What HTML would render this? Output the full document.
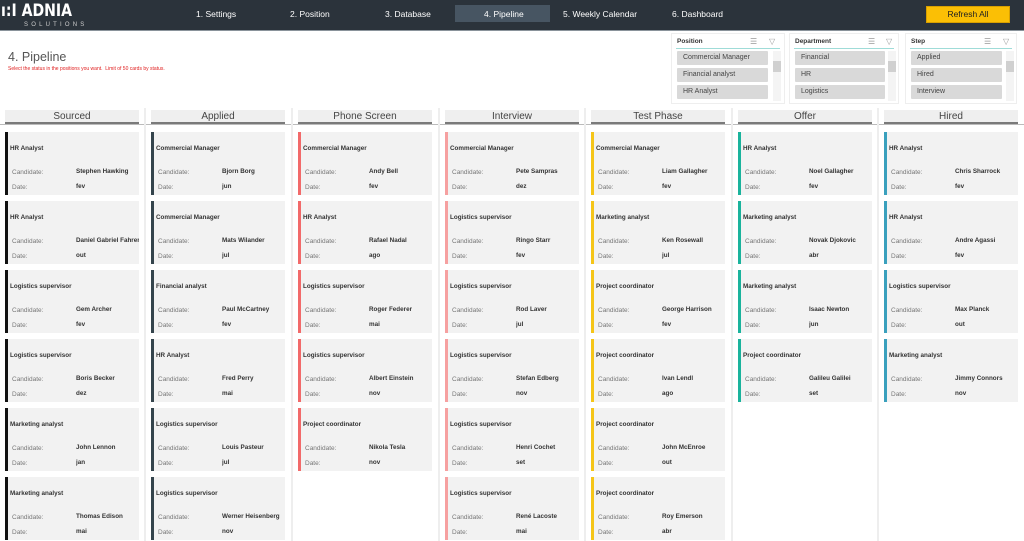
<!DOCTYPE html>
<html><head><meta charset="utf-8"><style>
*{margin:0;padding:0;box-sizing:border-box}
body{width:1024px;height:541px;overflow:hidden;background:#fff;font-family:"Liberation Sans",sans-serif;position:relative}
.top{position:absolute;left:0;top:0;width:1024px;height:31px;background:#2b333b;border-bottom:1px solid #8a939b}
.logo{position:absolute;left:1px;top:1px;color:#fff;font-weight:bold;font-size:17px;letter-spacing:0px;font-family:"DejaVu Sans Condensed","Liberation Sans Narrow","Liberation Sans",sans-serif;transform:scaleX(0.92);transform-origin:left}
.sol{position:absolute;left:24px;top:22px;color:#ccc;font-size:6px;letter-spacing:3.2px}
.nav{position:absolute;top:9px;color:#fff;font-size:8.5px}
.navsel{position:absolute;left:455px;top:5px;width:95px;height:17px;background:#475562}
.refresh{position:absolute;left:926px;top:6px;width:84px;height:17px;background:#fbbf05;border:1px solid #d9a000;font-size:8.5px;text-align:center;line-height:15px;color:#222}
h1{position:absolute;left:8px;top:50px;font-size:12.5px;font-weight:normal;color:#555}
.sub{position:absolute;left:8px;top:66px;font-size:5px;color:#e02020}
.sl{position:absolute;top:33px;height:71px;border:1px solid #eee;background:#fff}
.sl .h{position:absolute;left:5px;top:4px;font-size:6.5px;font-weight:bold;color:#333}
.sl .u{position:absolute;left:4px;right:4px;top:14px;height:1px;background:#9fdcd8}
.sl .ic{position:absolute;top:3px;font-size:8px;color:#999}
.sl .it{position:absolute;left:5px;height:14px;background:#d9d9d9;font-size:7px;color:#444;padding-left:6px;line-height:14px;border-radius:1px}
.sl .sb{position:absolute;width:8px;top:17px;height:50px;background:#f4f4f4}
.sl .th{position:absolute;width:8px;top:27px;height:11px;background:#d0d0d0}
.hline{position:absolute;left:0;top:124px;width:1024px;height:1px;background:#bbb}
.vs{position:absolute;top:108px;width:2px;height:433px;background:#eee}
.col{position:absolute;top:110px;width:134px}
.ch{height:14px;background:#efefef;border-bottom:2px solid #7a7a7a;text-align:center;font-size:10px;color:#444;line-height:14px}
.card{position:absolute;left:0;width:134px;height:63px;background:#f2f2f2;border-left:3px solid #111}
.card .t{position:absolute;left:2px;top:13px;font-size:6.3px;font-weight:bold;color:#333}
.card .l1,.card .l2{position:absolute;left:4px;font-size:6.5px;color:#777}
.card .l1{top:37px}.card .l2{top:52px}
.card .v1,.card .v2{position:absolute;left:68px;font-size:6.3px;font-weight:bold;color:#333;white-space:nowrap;overflow:hidden;width:63px}
.card .v1{top:36px}.card .v2{top:51px}
.c1{top:22px}.c2{top:91px}.c3{top:160px}.c4{top:229px}.c5{top:298px}.c6{top:367px}
.k0 .card{border-color:#111}.k1 .card{border-color:#34444c}.k2 .card{border-color:#f26a6a}.k3 .card{border-color:#f6a0a0}.k4 .card{border-color:#f5c518}.k5 .card{border-color:#1ab39c}.k6 .card{border-color:#3aa0bd}
</style></head><body>
<div class="top">
<div class="logo">ı:I ADNIA</div><div class="sol">SOLUTIONS</div>
<div class="navsel"></div>
<div class="nav" style="left:196px">1. Settings</div>
<div class="nav" style="left:290px">2. Position</div>
<div class="nav" style="left:385px">3. Database</div>
<div class="nav" style="left:484px">4. Pipeline</div>
<div class="nav" style="left:563px">5. Weekly Calendar</div>
<div class="nav" style="left:672px">6. Dashboard</div>
<div class="refresh">Refresh All</div>
</div>
<h1>4. Pipeline</h1>
<div class="sub">Select the status in the positions you want.&nbsp; Limit of 50 cards by status.</div>

<div class="sl" style="left:671px;width:114px"><div class="h">Position</div><div class="ic" style="left:78px">☰</div><div class="ic" style="left:97px">▽</div><div class="u"></div>
<div class="it" style="top:17px;width:91px">Commercial Manager</div><div class="it" style="top:34px;width:91px">Financial analyst</div><div class="it" style="top:51px;width:91px">HR Analyst</div><div class="sb" style="left:101px"></div><div class="th" style="left:101px"></div></div>
<div class="sl" style="left:789px;width:110px"><div class="h">Department</div><div class="ic" style="left:78px">☰</div><div class="ic" style="left:96px">▽</div><div class="u"></div>
<div class="it" style="top:17px;width:90px">Financial</div><div class="it" style="top:34px;width:90px">HR</div><div class="it" style="top:51px;width:90px">Logistics</div><div class="sb" style="left:98px"></div><div class="th" style="left:98px"></div></div>
<div class="sl" style="left:905px;width:112px"><div class="h">Step</div><div class="ic" style="left:78px">☰</div><div class="ic" style="left:97px">▽</div><div class="u"></div>
<div class="it" style="top:17px;width:91px">Applied</div><div class="it" style="top:34px;width:91px">Hired</div><div class="it" style="top:51px;width:91px">Interview</div><div class="sb" style="left:100px"></div><div class="th" style="left:100px"></div></div>

<div class="hline"></div>
<div class="vs" style="left:144px"></div><div class="vs" style="left:291px"></div><div class="vs" style="left:438px"></div><div class="vs" style="left:584px"></div><div class="vs" style="left:731px"></div><div class="vs" style="left:877px"></div>

<div class="col k0" style="left:5px"><div class="ch">Sourced</div>
<div class="card c1"><div class="t">HR Analyst</div><div class="l1">Candidate:</div><div class="v1">Stephen Hawking</div><div class="l2">Date:</div><div class="v2">fev</div></div>
<div class="card c2"><div class="t">HR Analyst</div><div class="l1">Candidate:</div><div class="v1">Daniel Gabriel Fahrenheit</div><div class="l2">Date:</div><div class="v2">out</div></div>
<div class="card c3"><div class="t">Logistics supervisor</div><div class="l1">Candidate:</div><div class="v1">Gem Archer</div><div class="l2">Date:</div><div class="v2">fev</div></div>
<div class="card c4"><div class="t">Logistics supervisor</div><div class="l1">Candidate:</div><div class="v1">Boris Becker</div><div class="l2">Date:</div><div class="v2">dez</div></div>
<div class="card c5"><div class="t">Marketing analyst</div><div class="l1">Candidate:</div><div class="v1">John Lennon</div><div class="l2">Date:</div><div class="v2">jan</div></div>
<div class="card c6"><div class="t">Marketing analyst</div><div class="l1">Candidate:</div><div class="v1">Thomas Edison</div><div class="l2">Date:</div><div class="v2">mai</div></div>
</div>

<div class="col k1" style="left:151px"><div class="ch">Applied</div>
<div class="card c1"><div class="t">Commercial Manager</div><div class="l1">Candidate:</div><div class="v1">Bjorn Borg</div><div class="l2">Date:</div><div class="v2">jun</div></div>
<div class="card c2"><div class="t">Commercial Manager</div><div class="l1">Candidate:</div><div class="v1">Mats Wilander</div><div class="l2">Date:</div><div class="v2">jul</div></div>
<div class="card c3"><div class="t">Financial analyst</div><div class="l1">Candidate:</div><div class="v1">Paul McCartney</div><div class="l2">Date:</div><div class="v2">fev</div></div>
<div class="card c4"><div class="t">HR Analyst</div><div class="l1">Candidate:</div><div class="v1">Fred Perry</div><div class="l2">Date:</div><div class="v2">mai</div></div>
<div class="card c5"><div class="t">Logistics supervisor</div><div class="l1">Candidate:</div><div class="v1">Louis Pasteur</div><div class="l2">Date:</div><div class="v2">jul</div></div>
<div class="card c6"><div class="t">Logistics supervisor</div><div class="l1">Candidate:</div><div class="v1">Werner Heisenberg</div><div class="l2">Date:</div><div class="v2">nov</div></div>
</div>

<div class="col k2" style="left:298px"><div class="ch">Phone Screen</div>
<div class="card c1"><div class="t">Commercial Manager</div><div class="l1">Candidate:</div><div class="v1">Andy Bell</div><div class="l2">Date:</div><div class="v2">fev</div></div>
<div class="card c2"><div class="t">HR Analyst</div><div class="l1">Candidate:</div><div class="v1">Rafael Nadal</div><div class="l2">Date:</div><div class="v2">ago</div></div>
<div class="card c3"><div class="t">Logistics supervisor</div><div class="l1">Candidate:</div><div class="v1">Roger Federer</div><div class="l2">Date:</div><div class="v2">mai</div></div>
<div class="card c4"><div class="t">Logistics supervisor</div><div class="l1">Candidate:</div><div class="v1">Albert Einstein</div><div class="l2">Date:</div><div class="v2">nov</div></div>
<div class="card c5"><div class="t">Project coordinator</div><div class="l1">Candidate:</div><div class="v1">Nikola Tesla</div><div class="l2">Date:</div><div class="v2">nov</div></div>
</div>

<div class="col k3" style="left:445px"><div class="ch">Interview</div>
<div class="card c1"><div class="t">Commercial Manager</div><div class="l1">Candidate:</div><div class="v1">Pete Sampras</div><div class="l2">Date:</div><div class="v2">dez</div></div>
<div class="card c2"><div class="t">Logistics supervisor</div><div class="l1">Candidate:</div><div class="v1">Ringo Starr</div><div class="l2">Date:</div><div class="v2">fev</div></div>
<div class="card c3"><div class="t">Logistics supervisor</div><div class="l1">Candidate:</div><div class="v1">Rod Laver</div><div class="l2">Date:</div><div class="v2">jul</div></div>
<div class="card c4"><div class="t">Logistics supervisor</div><div class="l1">Candidate:</div><div class="v1">Stefan Edberg</div><div class="l2">Date:</div><div class="v2">nov</div></div>
<div class="card c5"><div class="t">Logistics supervisor</div><div class="l1">Candidate:</div><div class="v1">Henri Cochet</div><div class="l2">Date:</div><div class="v2">set</div></div>
<div class="card c6"><div class="t">Logistics supervisor</div><div class="l1">Candidate:</div><div class="v1">René Lacoste</div><div class="l2">Date:</div><div class="v2">mai</div></div>
</div>

<div class="col k4" style="left:591px"><div class="ch">Test Phase</div>
<div class="card c1"><div class="t">Commercial Manager</div><div class="l1">Candidate:</div><div class="v1">Liam Gallagher</div><div class="l2">Date:</div><div class="v2">fev</div></div>
<div class="card c2"><div class="t">Marketing analyst</div><div class="l1">Candidate:</div><div class="v1">Ken Rosewall</div><div class="l2">Date:</div><div class="v2">jul</div></div>
<div class="card c3"><div class="t">Project coordinator</div><div class="l1">Candidate:</div><div class="v1">George Harrison</div><div class="l2">Date:</div><div class="v2">fev</div></div>
<div class="card c4"><div class="t">Project coordinator</div><div class="l1">Candidate:</div><div class="v1">Ivan Lendl</div><div class="l2">Date:</div><div class="v2">ago</div></div>
<div class="card c5"><div class="t">Project coordinator</div><div class="l1">Candidate:</div><div class="v1">John McEnroe</div><div class="l2">Date:</div><div class="v2">out</div></div>
<div class="card c6"><div class="t">Project coordinator</div><div class="l1">Candidate:</div><div class="v1">Roy Emerson</div><div class="l2">Date:</div><div class="v2">abr</div></div>
</div>

<div class="col k5" style="left:738px"><div class="ch">Offer</div>
<div class="card c1"><div class="t">HR Analyst</div><div class="l1">Candidate:</div><div class="v1">Noel Gallagher</div><div class="l2">Date:</div><div class="v2">fev</div></div>
<div class="card c2"><div class="t">Marketing analyst</div><div class="l1">Candidate:</div><div class="v1">Novak Djokovic</div><div class="l2">Date:</div><div class="v2">abr</div></div>
<div class="card c3"><div class="t">Marketing analyst</div><div class="l1">Candidate:</div><div class="v1">Isaac Newton</div><div class="l2">Date:</div><div class="v2">jun</div></div>
<div class="card c4"><div class="t">Project coordinator</div><div class="l1">Candidate:</div><div class="v1">Galileu Galilei</div><div class="l2">Date:</div><div class="v2">set</div></div>
</div>

<div class="col k6" style="left:884px"><div class="ch">Hired</div>
<div class="card c1"><div class="t">HR Analyst</div><div class="l1">Candidate:</div><div class="v1">Chris Sharrock</div><div class="l2">Date:</div><div class="v2">fev</div></div>
<div class="card c2"><div class="t">HR Analyst</div><div class="l1">Candidate:</div><div class="v1">Andre Agassi</div><div class="l2">Date:</div><div class="v2">fev</div></div>
<div class="card c3"><div class="t">Logistics supervisor</div><div class="l1">Candidate:</div><div class="v1">Max Planck</div><div class="l2">Date:</div><div class="v2">out</div></div>
<div class="card c4"><div class="t">Marketing analyst</div><div class="l1">Candidate:</div><div class="v1">Jimmy Connors</div><div class="l2">Date:</div><div class="v2">nov</div></div>
</div>
</body></html>
